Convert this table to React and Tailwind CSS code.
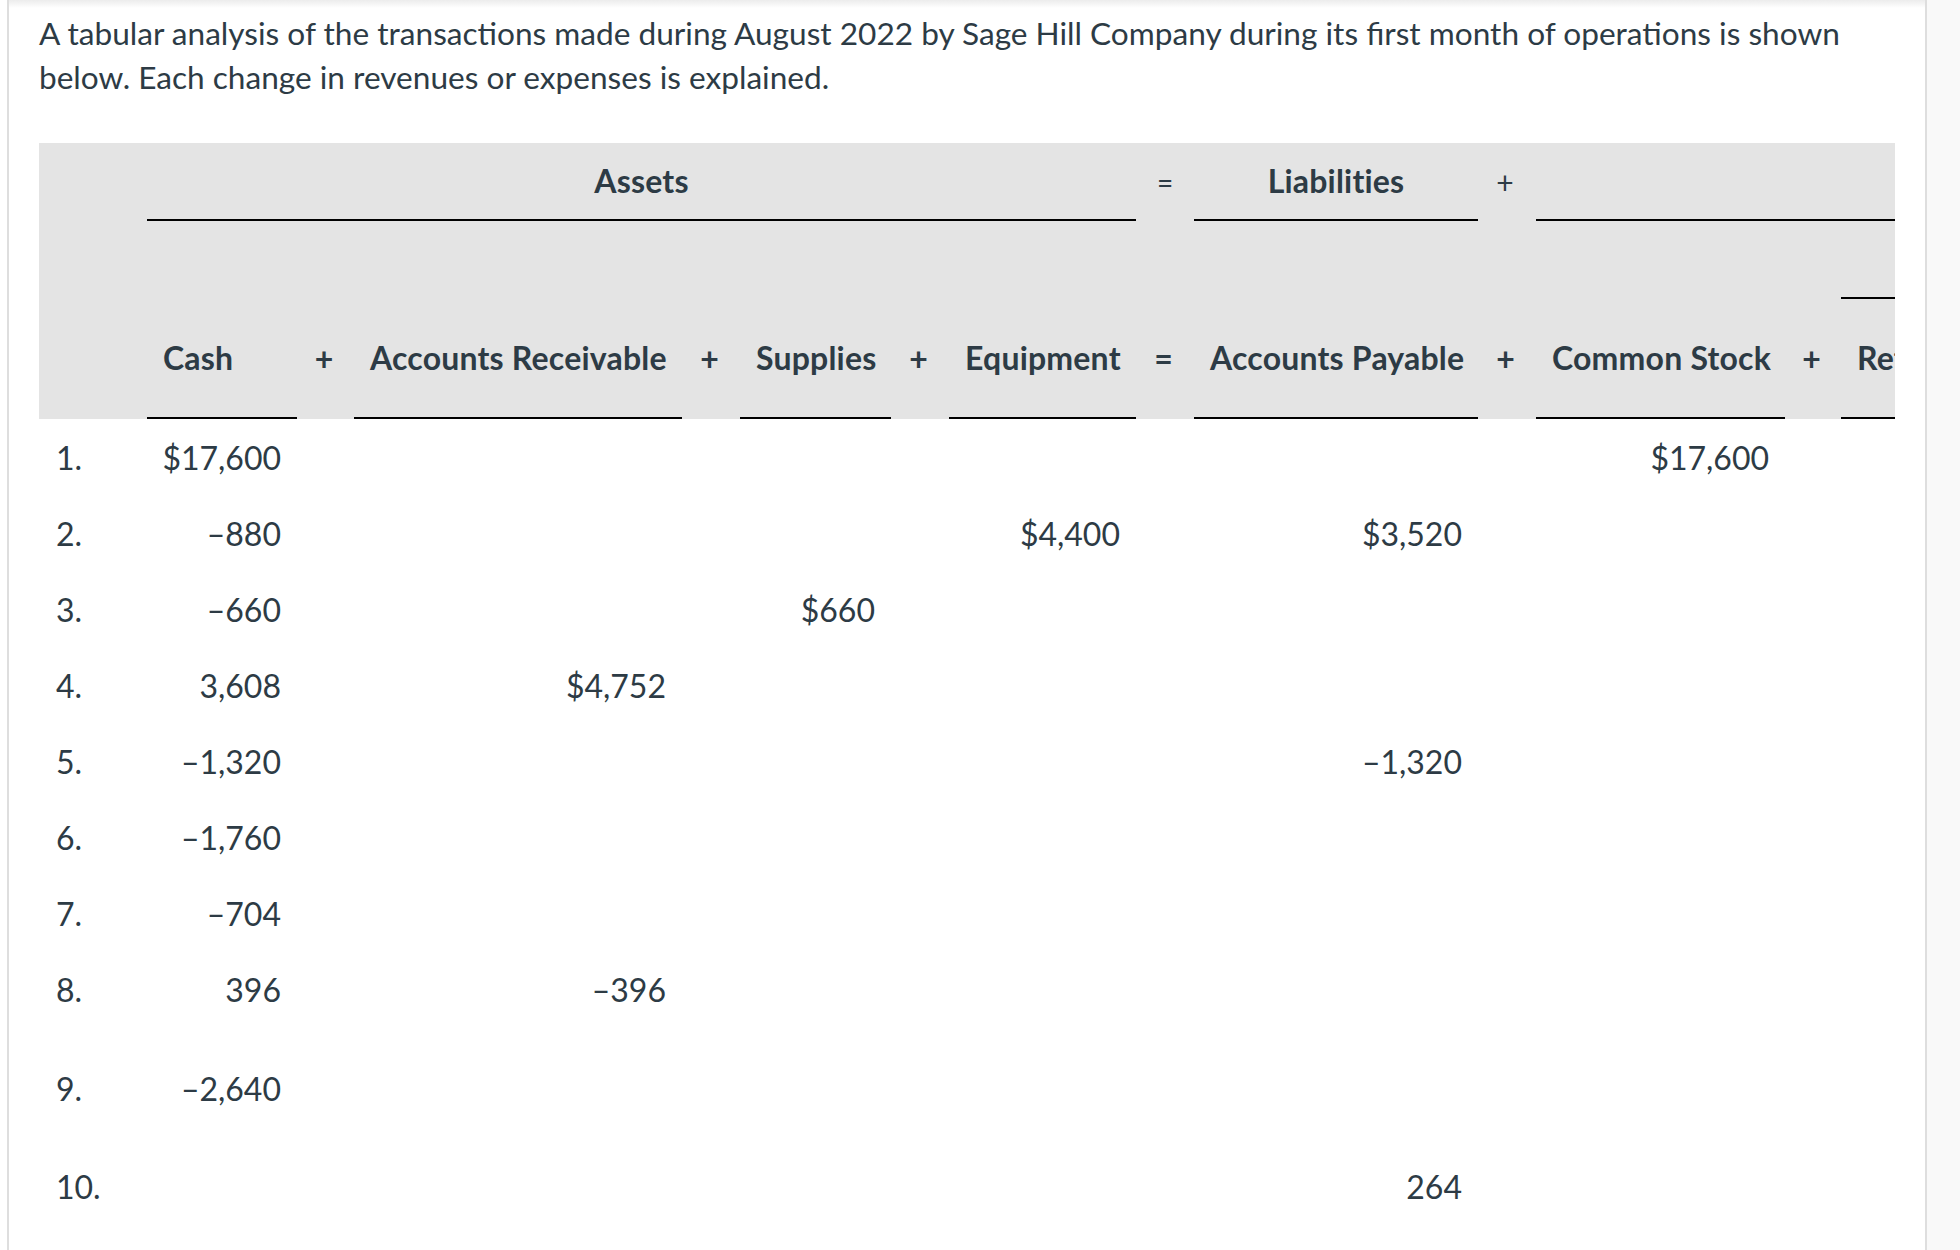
import React from "react";

const GRID =
  "grid w-max grid-cols-[108px_150px_57px_328px_58px_151px_58px_187px_58px_284px_58px_249px_56px_320px_58px_200px_58px_200px]";

const headerC = [
  { t: "", kind: "num" },
  { t: "Cash", kind: "data" },
  { t: "+", kind: "op" },
  { t: "Accounts Receivable", kind: "data" },
  { t: "+", kind: "op" },
  { t: "Supplies", kind: "data" },
  { t: "+", kind: "op" },
  { t: "Equipment", kind: "data" },
  { t: "=", kind: "op" },
  { t: "Accounts Payable", kind: "data" },
  { t: "+", kind: "op" },
  { t: "Common Stock", kind: "data" },
  { t: "+", kind: "op" },
  { t: "Retained Earnings", kind: "data" },
  { t: "+", kind: "op" },
  { t: "Revenues", kind: "data" },
  { t: "\u2212", kind: "op" },
  { t: "Expenses", kind: "data" },
];

const rows = [
  { n: "1.", v: { 1: "$17,600", 11: "$17,600" }, h: "h-[76px]" },
  { n: "2.", v: { 1: "\u2013880", 7: "$4,400", 9: "$3,520" }, h: "h-[76px]" },
  { n: "3.", v: { 1: "\u2013660", 5: "$660" }, h: "h-[76px]" },
  { n: "4.", v: { 1: "3,608", 3: "$4,752" }, h: "h-[76px]" },
  { n: "5.", v: { 1: "\u20131,320", 9: "\u20131,320" }, h: "h-[76px]" },
  { n: "6.", v: { 1: "\u20131,760" }, h: "h-[76px]" },
  { n: "7.", v: { 1: "\u2013704" }, h: "h-[76px]" },
  { n: "8.", v: { 1: "396", 3: "\u2013396" }, h: "h-[76px]" },
  { n: "9.", v: { 1: "\u20132,640" }, h: "h-[121px]" },
  { n: "10.", v: { 9: "264" }, h: "h-[76px]" },
];

export default function App() {
  return (
    <div className="flex h-[1250px] w-full overflow-hidden bg-white font-[Lato,sans-serif] text-[#2d3b45]">
      <div className="w-[7px] shrink-0 bg-white" />
      <div className="flex w-[1920px] shrink-0 flex-col border-x-2 border-[#dedede] bg-white">
        <div className="h-[8px] bg-gradient-to-b from-[#ececec] to-white" />
        <div className="px-[30px]">
          <p className="mt-[3px] mb-[44px] text-[31.6px] leading-[44px]">
            A tabular analysis of the transactions made during August 2022 by Sage Hill Company during its first month of operations is shown
            <br />
            below. Each change in revenues or expenses is explained.
          </p>
          <div className="w-[1856px] overflow-hidden">
            {/* Header */}
            <div className={GRID + " text-[32px]"}>
              {/* Row A */}
              <div className="h-[78px] bg-[#e4e4e4]" />
              <div className="col-span-7 flex h-[78px] items-center justify-center border-b-2 border-black bg-[#e4e4e4] font-bold tracking-[0.2px]">
                Assets
              </div>
              <div className="flex h-[78px] items-center justify-center bg-[#e4e4e4] text-[28px]">=</div>
              <div className="flex h-[78px] items-center justify-center border-b-2 border-black bg-[#e4e4e4] font-bold tracking-[0.2px]">
                Liabilities
              </div>
              <div className="flex h-[78px] items-center justify-center bg-[#e4e4e4] pr-[4px] text-[30px]">+</div>
              <div className="col-span-7 h-[78px] border-b-2 border-black bg-[#e4e4e4]" />
              {/* Row B */}
              <div className="col-span-13 h-[78px] bg-[#e4e4e4]" />
              <div className="col-span-5 h-[78px] border-b-2 border-black bg-[#e4e4e4]" />
              {/* Row C */}
              {headerC.map((c, i) =>
                c.kind === "data" ? (
                  <div
                    key={i}
                    className="flex h-[120px] items-center whitespace-nowrap border-b-2 border-black bg-[#e4e4e4] pl-4 font-bold tracking-[0.2px]"
                  >
                    {c.t}
                  </div>
                ) : c.kind === "op" ? (
                  <div key={i} className="flex h-[120px] items-center justify-center bg-[#e4e4e4] pr-[3px] font-bold">
                    {c.t}
                  </div>
                ) : (
                  <div key={i} className="h-[120px] bg-[#e4e4e4]" />
                )
              )}
            </div>
            {/* Body */}
            <div className={GRID + " text-[32px]"}>
              {rows.map((r, ri) =>
                headerC.map((c, ci) =>
                  ci === 0 ? (
                    <div key={ri + "-" + ci} className={"flex items-center pl-[17px] pt-[2px] " + r.h}>
                      {r.n}
                    </div>
                  ) : (
                    <div key={ri + "-" + ci} className={"flex items-center justify-end whitespace-nowrap pr-4 pt-[2px] " + r.h}>
                      {r.v[ci] || ""}
                    </div>
                  )
                )
              )}
            </div>
          </div>
        </div>
      </div>
      <div className="flex-1 bg-[#f9f9f9]" />
    </div>
  );
}
